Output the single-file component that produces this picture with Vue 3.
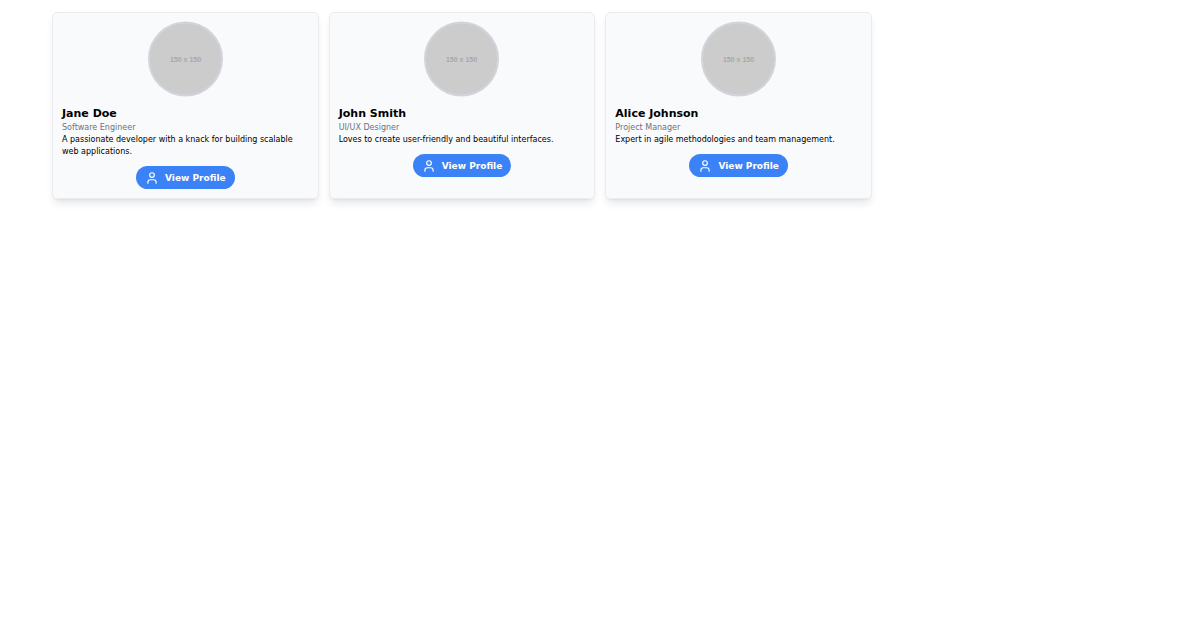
<template>
  <main class="profiles">
    <article v-for="user in users" :key="user.name" class="card">
      <svg class="avatar" viewBox="0 0 75 75" role="img" :aria-label="user.name">
        <circle cx="37.5" cy="37" r="36.5" />
        <text x="37.5" y="40">150 x 150</text>
      </svg>
      <h2 class="name">{{ user.name }}</h2>
      <p class="role">{{ user.role }}</p>
      <p class="bio">{{ user.bio }}</p>
      <button type="button" class="profile-button">
        <svg class="icon" viewBox="0 0 24 24" aria-hidden="true">
          <path d="M19 21v-2a4 4 0 0 0-4-4H9a4 4 0 0 0-4 4v2" />
          <circle cx="12" cy="7" r="4" />
        </svg>
        <span>View Profile</span>
      </button>
    </article>
  </main>
</template>

<script setup>
const users = [
  {
    name: 'Jane Doe',
    role: 'Software Engineer',
    bio: 'A passionate developer with a knack for building scalable web applications.'
  },
  {
    name: 'John Smith',
    role: 'UI/UX Designer',
    bio: 'Loves to create user-friendly and beautiful interfaces.'
  },
  {
    name: 'Alice Johnson',
    role: 'Project Manager',
    bio: 'Expert in agile methodologies and team management.'
  }
]
</script>

<style>
body {
  margin: 0;
  background: #fff;
}
</style>

<style scoped>
.profiles {
  display: grid;
  grid-template-columns: repeat(3, 1fr);
  gap: 10px;
  box-sizing: border-box;
  max-width: 820px;
  margin: 12px 52px;
  color: #000;
  font-family: "DejaVu Sans", sans-serif;
}

.card {
  display: flex;
  flex-direction: column;
  box-sizing: border-box;
  padding: 9px;
  border: 1px solid #eaecef;
  border-radius: 5px;
  background: #f9fafb;
  box-shadow: 0 6px 9px -2px rgba(0, 0, 0, 0.1), 0 2px 3px -2px rgba(0, 0, 0, 0.1);
}

.avatar {
  align-self: center;
  width: 75px;
  height: 75px;
  margin-bottom: 9px;
  overflow: visible;
}

.avatar circle {
  fill: #ccc;
  stroke: #d1d5db;
  stroke-width: 2;
}

.avatar text {
  fill: #a8a8a8;
  font-family: "Liberation Sans", Arial, sans-serif;
  font-size: 7px;
  font-weight: 700;
  text-anchor: middle;
}

.name {
  margin: 0;
  font-size: 11px;
  font-weight: 700;
  line-height: 16px;
}

.role,
.bio {
  margin: 0;
  font-size: 8px;
  line-height: 12px;
}

.role {
  color: #6b7280;
}

.profile-button {
  display: flex;
  align-items: center;
  align-self: center;
  gap: 6px;
  height: 23px;
  margin-top: 8px;
  padding: 0 9px;
  border: 0;
  border-radius: 12px;
  background: #3b82f6;
  color: #fff;
  font-family: inherit;
  font-size: 9px;
  font-weight: 700;
  line-height: 14px;
  cursor: pointer;
}

.icon {
  width: 14px;
  height: 14px;
  fill: none;
  stroke: currentColor;
  stroke-width: 2;
  stroke-linecap: round;
  stroke-linejoin: round;
}
</style>
